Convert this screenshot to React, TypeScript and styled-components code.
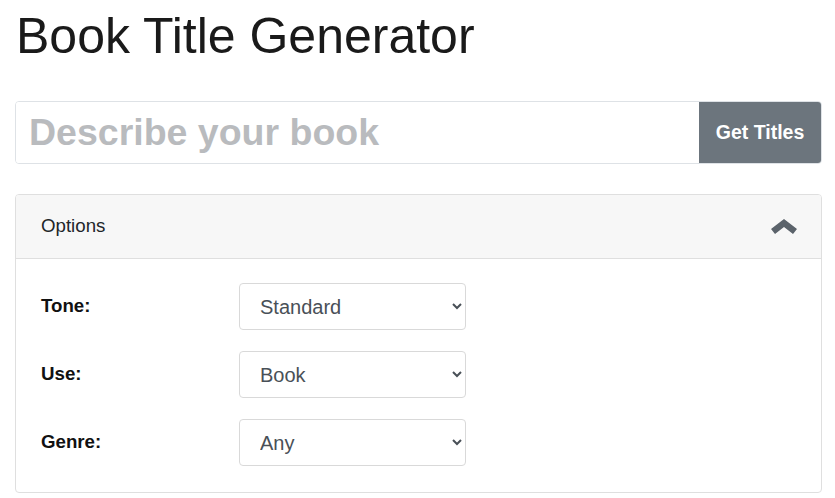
import React from "react";
import styled, { createGlobalStyle } from "styled-components";

const GlobalStyle = createGlobalStyle`
	* {
		box-sizing: border-box;
	}
	body {
		margin: 0;
		background: #ffffff;
		font-family: "Liberation Sans", Arial, sans-serif;
		color: #212529;
	}
`;

type Option = { label: string; value: string; choices: string[] };

const options: Option[] = [
	{ label: "Tone:", value: "Standard", choices: ["Standard", "Funny", "Serious", "Dramatic"] },
	{ label: "Use:", value: "Book", choices: ["Book", "Story", "Article", "Blog"] },
	{ label: "Genre:", value: "Any", choices: ["Any", "Fantasy", "Mystery", "Romance", "Sci-Fi"] },
];

const App: React.FC = () => {
	return (
		<>
			<GlobalStyle />
			<Page>
				<Title>Book Title Generator</Title>
				<InputGroup>
					<BookInput placeholder="Describe your book" />
					<SubmitButton>Get Titles</SubmitButton>
				</InputGroup>
				<Card>
					<CardHeader>
						<HeaderText>Options</HeaderText>
						<svg width="26" height="15" viewBox="0 0 26 15">
							<polygon points="13,0 26,10 22,15 13,8 4,15 0,10" fill="#5b636b" />
						</svg>
					</CardHeader>
					<CardBody>
						{options.map((opt) => (
							<Row key={opt.label}>
								<Label>{opt.label}</Label>
								<Select defaultValue={opt.value}>
									{opt.choices.map((c) => (
										<option key={c} value={c}>
											{c}
										</option>
									))}
								</Select>
							</Row>
						))}
					</CardBody>
				</Card>
			</Page>
		</>
	);
};

export default App;

const Page = styled.div`
	padding: 6px 13px 0 15px;
	display: flex;
	flex-direction: column;
`;

const Title = styled.h1`
	margin: 0 0 0 1px;
	font-size: 50px;
	font-weight: 400;
	line-height: 1.2;
	color: #1a1a1a;
`;

const InputGroup = styled.div`
	margin-top: 35px;
	display: flex;
	height: 63px;
	border: 1px solid #dee2e6;
	border-radius: 4px;
	overflow: hidden;
`;

const BookInput = styled.input`
	flex: 1;
	min-width: 0;
	border: none;
	outline: none;
	padding: 0 13px;
	font-family: "Liberation Sans", Arial, sans-serif;
	font-size: 37.5px;
	font-weight: 700;
	color: #212529;
	&::placeholder {
		color: #b9bbbe;
	}
`;

const SubmitButton = styled.button`
	width: 122px;
	border: none;
	background: #6c757d;
	color: #ffffff;
	font-family: "Liberation Sans", Arial, sans-serif;
	font-size: 19.5px;
	font-weight: 700;
	padding: 0;
	cursor: pointer;
`;

const Card = styled.div`
	margin-top: 30px;
	border: 1px solid #dfdfdf;
	border-radius: 4px;
	overflow: hidden;
`;

const CardHeader = styled.div`
	height: 64px;
	display: flex;
	align-items: center;
	justify-content: space-between;
	padding: 0 24px 0 25px;
	background: #f7f7f7;
	border-bottom: 1px solid #dfdfdf;
`;

const HeaderText = styled.span`
	font-size: 18.7px;
	color: #212529;
	margin-top: -2px;
`;

const CardBody = styled.div`
	padding: 24px 25px 26px;
	display: flex;
	flex-direction: column;
	gap: 21px;
`;

const Row = styled.div`
	display: flex;
	align-items: center;
`;

const Label = styled.label`
	width: 198px;
	font-size: 18.7px;
	font-weight: 700;
	color: #111111;
	margin-top: -2px;
`;

const Select = styled.select`
	width: 227px;
	height: 47px;
	padding: 0 8px 0 16px;
	border: 1px solid #d9d9d9;
	border-radius: 4px;
	background: #ffffff;
	font-family: "Liberation Sans", Arial, sans-serif;
	font-size: 20px;
	color: #495057;
`;
